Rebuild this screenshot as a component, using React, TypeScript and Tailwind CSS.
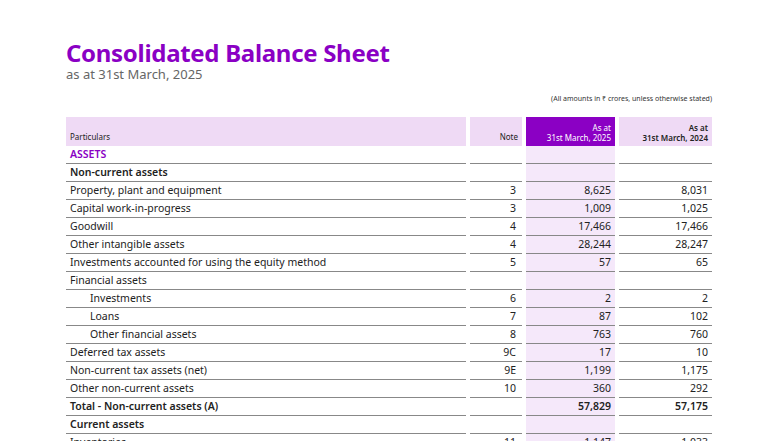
const rows: [string, string, string, string, string][] = [
  ["ASSETS", "", "", "", "sec"],
  ["Non-current assets", "", "", "", "head"],
  ["Property, plant and equipment", "3", "8,625", "8,031", ""],
  ["Capital work-in-progress", "3", "1,009", "1,025", ""],
  ["Goodwill", "4", "17,466", "17,466", ""],
  ["Other intangible assets", "4", "28,244", "28,247", ""],
  ["Investments accounted for using the equity method", "5", "57", "65", ""],
  ["Financial assets", "", "", "", ""],
  ["Investments", "6", "2", "2", "ind"],
  ["Loans", "7", "87", "102", "ind"],
  ["Other financial assets", "8", "763", "760", "ind"],
  ["Deferred tax assets", "9C", "17", "10", ""],
  ["Non-current tax assets (net)", "9E", "1,199", "1,175", ""],
  ["Other non-current assets", "10", "360", "292", ""],
  ["Total - Non-current assets (A)", "", "57,829", "57,175", "bold"],
  ["Current assets", "", "", "", "head"],
  ["Inventories", "11", "1,147", "1,033", ""],
];

export default function App() {
  return (
    <div className="w-[784px] h-[441px] overflow-hidden bg-white pl-[66px] pt-[40px]" style={{ fontFamily: '"Noto Sans", sans-serif' }}>
      <h1 className="text-[24px] leading-[26px] font-bold text-[#8a00c4] tracking-[-0.3px]">Consolidated Balance Sheet</h1>
      <div className="text-[13px] leading-[16px] text-[#666]">as at 31st March, 2025</div>
      <div className="w-[646px] text-right text-[7px] text-[#333] mt-[12px] leading-[10px]">(All amounts in ₹ crores, unless otherwise stated)</div>
      <div className="grid grid-cols-[400px_52px_89px_93px] gap-x-[4px] mt-[13px] text-[10.5px] text-[#222]">
        <div className="bg-[#efdaf5] h-[29px] flex items-end pl-[4px] pb-[3px] text-[8px]">Particulars</div>
        <div className="bg-[#efdaf5] h-[29px] flex items-end justify-end pr-[4px] pb-[3px] text-[8px]">Note</div>
        <div className="bg-[#8b00c4] h-[29px] flex flex-col items-end justify-end pr-[4px] pb-[3px] text-[8px] leading-[10px] text-white"><span>As at</span><span>31st March, 2025</span></div>
        <div className="bg-[#efdaf5] h-[29px] flex flex-col items-end justify-end pr-[4px] pb-[3px] text-[8px] leading-[10px] font-semibold"><span>As at</span><span>31st March, 2024</span></div>
        {rows.map(([p, n, a, b, k], i) => (
          <div key={i} className="contents">
            <div className={`h-[18px] flex items-center border-b border-[#888] ${k === "ind" ? "pl-[24px]" : "pl-[4px]"} ${k === "sec" ? "text-[#8a00c4] font-semibold" : ""} ${k === "head" || k === "bold" ? "font-semibold" : ""}`}>{p}</div>
            <div className="h-[18px] flex items-center justify-end pr-[6px] border-b border-[#888]">{n}</div>
            <div className={`h-[18px] flex items-center justify-end pr-[4px] border-b border-[#888] bg-[#f5e8fa] ${k === "bold" ? "font-semibold" : ""}`}>{a}</div>
            <div className={`h-[18px] flex items-center justify-end pr-[4px] border-b border-[#888] ${k === "bold" ? "font-semibold" : ""}`}>{b}</div>
          </div>
        ))}
      </div>
    </div>
  );
}
